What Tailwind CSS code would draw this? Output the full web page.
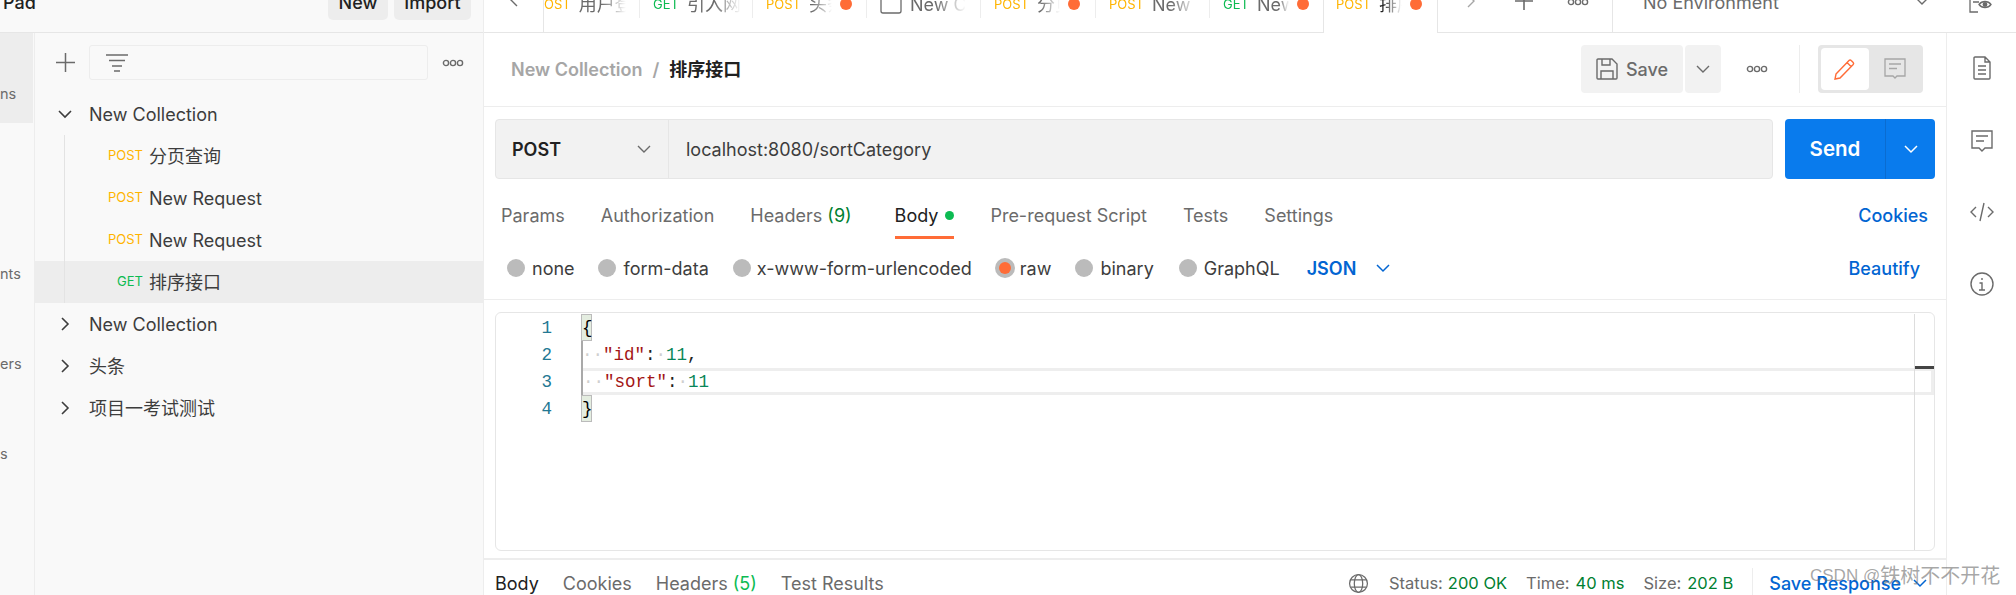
<!DOCTYPE html>
<html lang="zh">
<head>
    <meta charset="UTF-8">
    <title>排序接口</title>
    <script src="https://cdn.jsdelivr.net/npm/@tailwindcss/browser@4"></script>
</head>
<body class="bg-white">
<div class="flex h-[595px] w-[2016px] overflow-hidden text-[18px] text-[#212121] font-['Inter','Noto_Sans_CJK_SC',sans-serif]">

    <!-- left: scratch pad header, nav rail, collections tree -->
    <div class="flex w-[483px] shrink-0 flex-col bg-[#f9f9f9]">
        <div class="flex h-[33px] shrink-0 border-b border-[#e6e6e6]">
            <div class="w-[328px] pl-[3px] font-medium"><span class="-mt-[11px] block leading-[27px]">Pad</span></div>
            <div class="flex h-[20px] w-[60px] justify-center rounded-b-[5px] bg-[#ededed] font-medium"><span class="-mt-[11px] leading-[27px]">New</span></div>
            <div class="ml-[6px] flex h-[20px] w-[77px] justify-center rounded-b-[5px] bg-[#ededed] font-medium"><span class="-mt-[11px] leading-[27px]">Import</span></div>
        </div>
        <div class="flex min-h-0 flex-1">
            <nav class="w-[35px] shrink-0 border-r border-[#ededed] text-[14.5px] text-[#6b6b6b]">
                <div class="flex h-[90px] w-[33px] items-center bg-[#ededed] pt-[32px]">ns</div>
                <div class="mt-[138px] h-[26px] leading-[26px]">nts</div>
                <div class="mt-[64px] h-[26px] leading-[26px]">ers</div>
                <div class="mt-[64px] h-[26px] leading-[26px]">s</div>
            </nav>
            <div class="min-w-0 flex-1">
                <div class="flex h-[60px] items-start pt-[12px]">
                    <div class="flex h-[35px] w-[54px] items-center justify-center pl-[6px]">
                        <svg width="19" height="19" viewBox="0 0 19 19" fill="none" stroke="#6b6b6b" stroke-width="1.5"><path d="M9.500 0v19M0 9.500h19"/></svg>
                    </div>
                    <div class="flex h-[35px] w-[339px] items-center rounded-[3px] border border-[#ededed] pl-[16px]">
                        <svg width="22" height="18" viewBox="0 0 22 18" fill="none" stroke="#6b6b6b" stroke-width="1.4"><path d="M0 1h22M3 6.500h16M6 12h10M8 17h6"/></svg>
                    </div>
                    <div class="flex h-[35px] w-[50px] items-center justify-center">
                        <svg width="22" height="8" viewBox="0 0 22 8" fill="none" stroke="#6b6b6b" stroke-width="1.4"><circle cx="4" cy="4" r="2.6"/><circle cx="11" cy="4" r="2.6"/><circle cx="18" cy="4" r="2.6"/></svg>
                    </div>
                </div>
                <div class="relative text-[#3d3d3d]">
                    <div class="absolute left-[29px] top-[42px] z-10 h-[168px] w-px bg-[#e3e3e3]"></div>
                    <div class="flex h-[42px] items-center">
                        <div class="flex w-[54px] justify-center pl-[6px]"><svg width="14" height="9" viewBox="0 0 14 9" fill="none" stroke="#3d3d3d" stroke-width="1.6"><path d="M1 1l6 6 6-6"/></svg></div>
                        <span>New Collection</span>
                    </div>
                    <div class="flex h-[42px] items-center">
                        <span class="ml-[68px] w-[40px] text-right text-[13px] text-[#ffb400]">POST</span><span class="ml-[6px]">分页查询</span>
                    </div>
                    <div class="flex h-[42px] items-center">
                        <span class="ml-[68px] w-[40px] text-right text-[13px] text-[#ffb400]">POST</span><span class="ml-[6px]">New Request</span>
                    </div>
                    <div class="flex h-[42px] items-center">
                        <span class="ml-[68px] w-[40px] text-right text-[13px] text-[#ffb400]">POST</span><span class="ml-[6px]">New Request</span>
                    </div>
                    <div class="flex h-[42px] items-center bg-[#ededed]">
                        <span class="ml-[68px] w-[40px] text-right text-[13px] text-[#0cbb52]">GET</span><span class="ml-[6px]">排序接口</span>
                    </div>
                    <div class="flex h-[42px] items-center">
                        <div class="flex w-[54px] justify-center pl-[6px]"><svg width="9" height="14" viewBox="0 0 9 14" fill="none" stroke="#3d3d3d" stroke-width="1.6"><path d="M1 1l6 6-6 6"/></svg></div>
                        <span>New Collection</span>
                    </div>
                    <div class="flex h-[42px] items-center">
                        <div class="flex w-[54px] justify-center pl-[6px]"><svg width="9" height="14" viewBox="0 0 9 14" fill="none" stroke="#3d3d3d" stroke-width="1.6"><path d="M1 1l6 6-6 6"/></svg></div>
                        <span>头条</span>
                    </div>
                    <div class="flex h-[42px] items-center">
                        <div class="flex w-[54px] justify-center pl-[6px]"><svg width="9" height="14" viewBox="0 0 9 14" fill="none" stroke="#3d3d3d" stroke-width="1.6"><path d="M1 1l6 6-6 6"/></svg></div>
                        <span>项目一考试测试</span>
                    </div>
                </div>
            </div>
        </div>
    </div>

    <!-- main workbench -->
    <div class="flex min-w-0 flex-1 flex-col border-l border-[#ededed]">

        <!-- open request tabs -->
        <div class="flex h-[33px] shrink-0 border-b border-[#e6e6e6]">
            <div class="flex h-[32px] w-[60px] justify-center border-r border-[#e6e6e6]">
                <svg class="-mt-[7px]" width="9" height="14" viewBox="0 0 9 14" fill="none" stroke="#6b6b6b" stroke-width="1.4"><path d="M8 1L2 7l6 6"/></svg>
            </div>
            <div class="flex h-[18px] w-[96px] items-start border-r border-[#ededed] text-[#6b6b6b]">
                <div class="-mt-[9px] flex w-[82px] items-center overflow-hidden whitespace-nowrap [mask-image:linear-gradient(to_right,black_70%,transparent)]"><span class="text-[13px] text-[#ffb400]">OST</span><span class="ml-[8px]">用户登</span></div>
            </div>
            <div class="flex h-[18px] w-[113px] items-start border-r border-[#ededed] pl-[13px] text-[#6b6b6b]">
                <div class="-mt-[9px] flex w-[88px] items-center overflow-hidden whitespace-nowrap [mask-image:linear-gradient(to_right,black_70%,transparent)]"><span class="text-[13px] text-[#0cbb52]">GET</span><span class="ml-[8px]">引入网关</span></div>
            </div>
            <div class="flex h-[18px] w-[114px] items-start border-r border-[#ededed] pl-[13px] text-[#6b6b6b]">
                <div class="-mt-[9px] flex w-[66px] items-center overflow-hidden whitespace-nowrap [mask-image:linear-gradient(to_right,black_70%,transparent)]"><span class="text-[13px] text-[#ffb400]">POST</span><span class="ml-[8px]">头条</span></div>
                <span class="-mt-[2px] ml-[8px] size-[12px] shrink-0 rounded-full bg-[#ff6c37]"></span>
            </div>
            <div class="flex h-[18px] w-[114px] items-start border-r border-[#ededed] pl-[13px] text-[#6b6b6b]">
                <svg class="shrink-0 -mt-[1px]" width="22" height="15" viewBox="0 0 22 15" fill="none" stroke="#6b6b6b" stroke-width="1.3"><path d="M1 0v12a2 2 0 0 0 2 2h16a2 2 0 0 0 2-2V0"/></svg>
                <div class="-mt-[9px] ml-[8px] w-[56px] overflow-hidden whitespace-nowrap [mask-image:linear-gradient(to_right,black_45%,transparent)]">New Coll</div>
            </div>
            <div class="flex h-[18px] w-[115px] items-start border-r border-[#ededed] pl-[13px] text-[#6b6b6b]">
                <div class="-mt-[9px] flex w-[66px] items-center overflow-hidden whitespace-nowrap [mask-image:linear-gradient(to_right,black_70%,transparent)]"><span class="text-[13px] text-[#ffb400]">POST</span><span class="ml-[8px]">分页</span></div>
                <span class="-mt-[2px] ml-[8px] size-[12px] shrink-0 rounded-full bg-[#ff6c37]"></span>
            </div>
            <div class="flex h-[18px] w-[114px] items-start border-r border-[#ededed] pl-[13px] text-[#6b6b6b]">
                <div class="-mt-[9px] flex w-[88px] items-center overflow-hidden whitespace-nowrap [mask-image:linear-gradient(to_right,black_70%,transparent)]"><span class="text-[13px] text-[#ffb400]">POST</span><span class="ml-[8px]">New Req</span></div>
            </div>
            <div class="flex h-[18px] w-[113px] items-start pl-[13px] text-[#6b6b6b]">
                <div class="-mt-[9px] flex w-[66px] items-center overflow-hidden whitespace-nowrap [mask-image:linear-gradient(to_right,black_85%,transparent)]"><span class="text-[13px] text-[#0cbb52]">GET</span><span class="ml-[8px]">New</span></div>
                <span class="-mt-[2px] ml-[8px] size-[12px] shrink-0 rounded-full bg-[#ff6c37]"></span>
            </div>
            <div class="relative -mb-px flex h-[33px] w-[115px] items-start border-x border-[#e6e6e6] bg-white pl-[12px]">
                <div class="-mt-[9px] flex w-[66px] items-center overflow-hidden whitespace-nowrap [mask-image:linear-gradient(to_right,black_70%,transparent)]"><span class="text-[13px] text-[#ffb400]">POST</span><span class="ml-[8px]">排序</span></div>
                <span class="-mt-[2px] ml-[8px] size-[12px] shrink-0 rounded-full bg-[#ff6c37]"></span>
            </div>
            <div class="flex w-[66px] justify-center">
                <svg class="-mt-[6px]" width="9" height="14" viewBox="0 0 9 14" fill="none" stroke="#a6a6a6" stroke-width="1.4"><path d="M1 1l6 6-6 6"/></svg>
            </div>
            <div class="flex w-[40px] justify-center">
                <svg class="-mt-[9px]" width="20" height="20" viewBox="0 0 20 20" fill="none" stroke="#6b6b6b" stroke-width="1.6"><path d="M10 1v18M1 10h18"/></svg>
            </div>
            <div class="flex w-[68px] justify-center">
                <svg class="-mt-[2px]" width="22" height="8" viewBox="0 0 22 8" fill="none" stroke="#6b6b6b" stroke-width="1.4"><circle cx="4" cy="4" r="2.6"/><circle cx="11" cy="4" r="2.6"/><circle cx="18" cy="4" r="2.6"/></svg>
            </div>
            <div class="flex h-[32px] w-[333px] justify-between border-l border-[#e6e6e6] pl-[30px] pr-[16px]">
                <span class="-mt-[11px] leading-[27px] text-[#6b6b6b]">No Environment</span>
                <svg width="14" height="9" viewBox="0 0 14 9" fill="none" stroke="#6b6b6b" stroke-width="1.4" class="-mt-[3px]"><path d="M1 1l6 6 6-6"/></svg>
            </div>
            <div class="flex flex-1 justify-center">
                <svg class="-mt-[5px]" width="24" height="20" viewBox="0 0 24 20" fill="none" stroke="#6b6b6b" stroke-width="1.3"><path d="M1 0v17h8M4 3h9M4 7h6"/><path d="M10 9.500c3-4 9-4 12 0-3 4-9 4-12 0z"/><circle cx="16" cy="9.500" r="1.800" fill="#6b6b6b"/></svg>
            </div>
        </div>

        <div class="flex min-h-0 flex-1">
            <div class="flex min-w-0 flex-1 flex-col">

                <!-- breadcrumb + save -->
                <div class="flex h-[74px] shrink-0 items-center border-b border-[#ededed] pb-[1px] pl-[27px] pr-[23px]">
                    <span class="font-semibold text-[#a6a6a6]">New Collection</span>
                    <span class="mx-[10px] font-semibold text-[#a6a6a6]">/</span>
                    <span class="font-semibold">排序接口</span>
                    <div class="ml-auto flex h-[48px] w-[102px] items-center justify-center gap-[8px] rounded-[4px] bg-[#f2f2f2] font-medium text-[#6b6b6b]">
                        <svg width="22" height="22" viewBox="0 0 22 22" fill="none" stroke="#6b6b6b" stroke-width="1.4"><path d="M1 2a1 1 0 0 1 1-1h14l5 5v14a1 1 0 0 1-1 1H2a1 1 0 0 1-1-1z"/><path d="M6 1v6h8V1M5 21v-8h12v8"/></svg>
                        <span>Save</span>
                    </div>
                    <div class="ml-[2px] flex h-[48px] w-[36px] items-center justify-center rounded-[4px] bg-[#f2f2f2]">
                        <svg width="14" height="9" viewBox="0 0 14 9" fill="none" stroke="#6b6b6b" stroke-width="1.4"><path d="M1 1l6 6 6-6"/></svg>
                    </div>
                    <div class="flex w-[72px] justify-center">
                        <svg width="22" height="8" viewBox="0 0 22 8" fill="none" stroke="#6b6b6b" stroke-width="1.4"><circle cx="4" cy="4" r="2.6"/><circle cx="11" cy="4" r="2.6"/><circle cx="18" cy="4" r="2.6"/></svg>
                    </div>
                    <div class="ml-[6px] h-[48px] w-px bg-[#ededed]"></div>
                    <div class="ml-[18px] flex h-[48px] w-[105px] items-center rounded-[4px] bg-[#e6e6e6] p-[3px]">
                        <div class="flex h-[42px] w-[48px] items-center justify-center rounded-[4px] bg-white">
                            <svg width="22" height="22" viewBox="0 0 22 22" fill="none" stroke="#ff6c37" stroke-width="1.4"><path d="M2 16L15 2.500a1.500 1.500 0 0 1 2.200 0l2 2a1.500 1.500 0 0 1 0 2L6 20l-5 1zM13 4.500l4 4"/></svg>
                        </div>
                        <div class="flex flex-1 justify-center">
                            <svg width="22" height="22" viewBox="0 0 22 22" fill="none" stroke="#a6a6a6" stroke-width="1.3"><path d="M1 1h20v17h-8l-2 2-2-2H1zM5 6h12M5 10.500h8"/></svg>
                        </div>
                    </div>
                </div>

                <!-- method + url + send -->
                <div class="mt-[12px] flex h-[60px] shrink-0 items-stretch px-[11px]">
                    <div class="flex min-w-0 flex-1 rounded-[4px] border border-[#e6e6e6] bg-[#f2f2f2]">
                        <div class="flex w-[173px] items-center justify-between border-r border-[#e6e6e6] pl-[16px] pr-[17px] font-semibold">
                            <span>POST</span>
                            <svg width="14" height="9" viewBox="0 0 14 9" fill="none" stroke="#6b6b6b" stroke-width="1.4"><path d="M1 1l6 6 6-6"/></svg>
                        </div>
                        <div class="flex flex-1 items-center pl-[17px] text-[#3d3d3d]">localhost:8080/sortCategory</div>
                    </div>
                    <div class="ml-[12px] flex w-[150px] rounded-[4px] bg-[#097bed] text-white">
                        <div class="flex w-[101px] items-center justify-center border-r border-[#0a6cd1] text-[20.5px] font-semibold">Send</div>
                        <div class="flex flex-1 items-center justify-center">
                            <svg width="14" height="9" viewBox="0 0 14 9" fill="none" stroke="#fff" stroke-width="1.5"><path d="M1 1l6 6 6-6"/></svg>
                        </div>
                    </div>
                </div>

                <!-- request tabs -->
                <div class="flex h-[72px] shrink-0 items-center pl-[17px] pr-[18px] text-[#6b6b6b]">
                    <div class="flex items-center gap-[36px]">
                        <span>Params</span>
                        <span>Authorization</span>
                        <span class="mr-[7px]">Headers <span class="text-[#007f31]">(9)</span></span>
                        <span class="relative flex items-center text-[#212121]">Body<span class="ml-[7px] size-[9px] rounded-full bg-[#0cbb52]"></span><span class="absolute -bottom-[10px] left-0 right-0 h-[3px] bg-[#ff6c37]"></span></span>
                        <span>Pre-request Script</span>
                        <span>Tests</span>
                        <span>Settings</span>
                    </div>
                    <span class="ml-auto font-medium text-[#0265d2]">Cookies</span>
                </div>

                <!-- body type radios -->
                <div class="flex h-[49px] shrink-0 items-center border-b border-[#ededed] pb-[14px] pl-[23px] pr-[26px] text-[#3d3d3d]">
                    <span class="size-[18px] rounded-full bg-[#bbbbbb]"></span><span class="ml-[7px]">none</span>
                    <span class="ml-[23px] size-[18px] rounded-full bg-[#bbbbbb]"></span><span class="ml-[8px]">form-data</span>
                    <span class="ml-[24px] size-[18px] rounded-full bg-[#bbbbbb]"></span><span class="ml-[6px]">x-www-form-urlencoded</span>
                    <span class="ml-[23px] flex size-[20px] items-center justify-center rounded-full bg-[#bbbbbb]"><span class="size-[12px] rounded-full bg-[#ff6c37]"></span></span><span class="ml-[5px]">raw</span>
                    <span class="ml-[24px] size-[18px] rounded-full bg-[#bbbbbb]"></span><span class="ml-[7px]">binary</span>
                    <span class="ml-[25px] size-[18px] rounded-full bg-[#bbbbbb]"></span><span class="ml-[7px]">GraphQL</span>
                    <span class="ml-[27px] font-semibold text-[#0265d2]">JSON</span>
                    <svg class="ml-[20px]" width="14" height="9" viewBox="0 0 14 9" fill="none" stroke="#0265d2" stroke-width="1.5"><path d="M1 1l6 6 6-6"/></svg>
                    <span class="ml-auto font-medium text-[#0265d2]">Beautify</span>
                </div>

                <!-- json editor -->
                <div class="mx-[11px] mt-[12px] flex h-[239px] shrink-0 rounded-[6px] border border-[#e6e6e6] pt-[1px] font-['Liberation_Mono',monospace] text-[17.5px] leading-[29px]">
                    <div class="w-[86px] shrink-0 pr-[30px] text-right text-[#237893]">
                        <div class="h-[27px]">1</div><div class="h-[27px]">2</div><div class="h-[27px]">3</div><div class="h-[27px]">4</div>
                    </div>
                    <div class="relative min-w-0 flex-1">
                        <div class="absolute -left-px top-[27px] h-[54px] w-[2px] bg-[#a9a9a9]"></div>
                        <div class="h-[27px]"><span class="-ml-px inline-block h-[27px] w-[11px] border border-[#bbbbbb] bg-[#e4ede0] leading-[27px] text-black">{</span></div>
                        <div class="h-[27px] whitespace-pre"><span class="text-[#d0d0d0]">··</span><span class="text-[#a31515]">"id"</span>:<span class="text-[#d0d0d0]">·</span><span class="text-[#098658]">11</span>,</div>
                        <div class="-mr-[20px] ml-px h-[27px] whitespace-pre border-y-[3px] border-r-[3px] border-[#eeeeee] leading-[23px]"><span class="text-[#d0d0d0]">··</span><span class="text-[#a31515]">"sort"</span>:<span class="text-[#d0d0d0]">·</span><span class="text-[#098658]">11</span></div>
                        <div class="h-[27px]"><span class="-ml-px inline-block h-[27px] w-[11px] border border-[#bbbbbb] bg-[#e4ede0] leading-[27px] text-black">}</span></div>
                    </div>
                    <div class="relative w-[20px] shrink-0 border-l border-[#dddddd]">
                        <div class="absolute left-0 right-0 top-[52px] h-[3px] bg-[#444444]"></div>
                    </div>
                </div>

                <!-- response bar -->
                <div class="mt-[7px] flex min-h-0 flex-1 items-center border-t-[2px] border-[#ededed] pl-[11px] pr-[19px] pt-[12px] text-[#6b6b6b]">
                    <span class="text-[#212121]">Body</span>
                    <span class="ml-[24px]">Cookies</span>
                    <span class="ml-[24px]">Headers <span class="text-[#0cbb52]">(5)</span></span>
                    <span class="ml-[24px]">Test Results</span>
                    <svg class="ml-auto" width="21" height="21" viewBox="0 0 20 20" fill="none" stroke="#6b6b6b" stroke-width="1.2"><circle cx="10" cy="10" r="8.500"/><ellipse cx="10" cy="10" rx="4" ry="8.500"/><path d="M2.500 6.500h15M2.500 13.500h15"/></svg>
                    <span class="ml-[20px] text-[16.5px]">Status:</span><span class="ml-[5px] text-[16.5px] text-[#007f31]">200 OK</span>
                    <span class="ml-[19px] text-[16.5px]">Time:</span><span class="ml-[6px] text-[16.5px] text-[#007f31]">40 ms</span>
                    <span class="ml-[19px] text-[16.5px]">Size:</span><span class="ml-[6px] text-[16.5px] text-[#007f31]">202 B</span>
                    <span class="ml-[19px] h-[32px] w-px bg-[#ededed]"></span>
                    <span class="ml-[16px] font-medium text-[#0265d2]">Save Response</span>
                    <svg class="ml-[12px]" width="14" height="9" viewBox="0 0 14 9" fill="none" stroke="#0265d2" stroke-width="1.5"><path d="M1 1l6 6 6-6"/></svg>
                </div>
            </div>

            <!-- right rail icons -->
            <div class="flex w-[70px] shrink-0 flex-col items-center gap-[50px] border-l border-[#ededed] pt-[23px]">
                <svg width="18" height="24" viewBox="0 0 18 24" fill="none" stroke="#6b6b6b" stroke-width="1.4"><path d="M1 2a1 1 0 0 1 1-1h10l5 5v16a1 1 0 0 1-1 1H2a1 1 0 0 1-1-1zM12 1v5h5M5 10h8M5 14h8M5 18h8"/></svg>
                <svg width="22" height="22" viewBox="0 0 22 22" fill="none" stroke="#6b6b6b" stroke-width="1.4"><path d="M1 1h20v17h-7l-3 3-3-3H1zM5 6h12M5 11h8"/></svg>
                <svg width="24" height="20" viewBox="0 0 24 20" fill="none" stroke="#6b6b6b" stroke-width="1.4"><path d="M6 5l-5 5 5 5M18 5l5 5-5 5M14 1L10 19"/></svg>
                <svg width="24" height="24" viewBox="0 0 24 24" fill="none" stroke="#6b6b6b" stroke-width="1.4"><circle cx="12" cy="12" r="11"/><path d="M12 6v2M9.500 11H12v7M9 18h6"/></svg>
            </div>
        </div>
    </div>
</div>

<!-- watermark over the screenshot -->
<div class="absolute left-[1810px] top-[563px] flex items-center whitespace-nowrap leading-[26px] text-[#6b6b6b]/60 font-['Liberation_Sans','Noto_Sans_CJK_SC',sans-serif]"><span class="text-[17px]">CSDN @</span><span class="text-[20px]">铁树不不开花</span></div>
</body>
</html>
